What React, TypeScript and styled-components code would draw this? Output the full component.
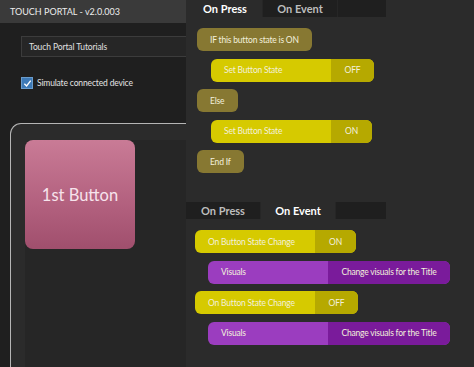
import React from 'react';
import styled, { createGlobalStyle } from 'styled-components';

const GlobalStyle = createGlobalStyle`
  html, body {
    margin: 0;
    padding: 0;
    background: #2b2b2b;
  }
  body {
    font-family: Lato, "Open Sans", sans-serif;
  }
`;

const Screen = styled.div`
  display: flex;
  width: 474px;
  height: 367px;
  overflow: hidden;
`;

/* left: the Touch Portal window */
const AppWindow = styled.div`
  flex: none;
  width: 186px;
  display: flex;
  flex-direction: column;
  background: #1f1f1f;
  overflow: hidden;
`;

const TitleBar = styled.div`
  height: 23px;
  display: flex;
  align-items: center;
  padding-left: 10px;
  background: #3a3a3a;
  color: #ececec;
  font-size: 9px;
`;

const WindowBody = styled.div`
  padding: 13px 0 0 21px;
`;

const Select = styled.div`
  height: 19px;
  display: flex;
  align-items: center;
  padding-left: 7px;
  background: #262626;
  border: 1px solid #3c3c3c;
  border-right: none;
  color: #e0e0e0;
  font-size: 8.5px;
  letter-spacing: -0.1px;
`;

const CheckRow = styled.label`
  display: flex;
  align-items: center;
  gap: 4px;
  margin-top: 20px;
  color: #e4e4e4;
  font-size: 8.5px;
  letter-spacing: -0.15px;
`;

const CheckBox = styled.span`
  width: 12px;
  height: 12px;
  box-sizing: border-box;
  display: flex;
  align-items: center;
  justify-content: center;
  background: #3d79b6;
  border: 1px solid #6a9ccc;
`;

const DevicePanel = styled.div`
  flex: 1;
  display: flex;
  margin: 34px 0 0 10px;
  padding: 16px 0 0 14px;
  background: #2b2b2b;
  border: 1px solid #b5b5b5;
  border-right: none;
  border-bottom: none;
  border-radius: 11px 0 0 0;
`;

const DeviceGrid = styled.div`
  flex: 1;
  background: #262626;
  border-radius: 6px 0 0 0;
`;

const TileButton = styled.div`
  width: 110px;
  height: 109px;
  display: flex;
  align-items: center;
  justify-content: center;
  border-radius: 8px;
  background: linear-gradient(180deg, #c97b96 0%, #b2607e 60%, #a04f6d 100%);
  color: #f7e3ec;
  font-size: 16.5px;
`;

/* right: the action editor */
const ActionPanel = styled.div`
  flex: 1;
  display: flex;
  flex-direction: column;
  background: #2b2b2b;
`;

const Section = styled.div<{ $offset: number; $top: number }>`
  display: flex;
  flex-direction: column;
  margin-top: ${(p) => p.$top}px;
  padding-left: ${(p) => p.$offset}px;
`;

const TabStrip = styled.div<{ $width: number }>`
  display: flex;
  width: ${(p) => p.$width}px;
  height: 17px;
  background: #1f1f1f;
  margin-bottom: 11px;
`;

const Tab = styled.div<{ $active?: boolean }>`
  width: 74px;
  display: flex;
  align-items: center;
  justify-content: center;
  background: ${(p) => (p.$active ? '#2b2b2b' : 'transparent')};
  color: ${(p) => (p.$active ? '#ffffff' : '#bdbdbd')};
  font-size: 11px;
  font-weight: 700;
  border-right: 1px solid #262626;
`;

const Blocks = styled.div`
  display: flex;
  flex-direction: column;
  gap: 7.5px;
`;

const Block = styled.div<{ $indent: number; $width: number; $bg: string }>`
  display: flex;
  height: 23px;
  width: ${(p) => p.$width}px;
  margin-left: ${(p) => p.$indent}px;
  border-radius: 6px;
  overflow: hidden;
  background: ${(p) => p.$bg};
  font-size: 8.5px;
  letter-spacing: -0.2px;
  color: #f3f0dc;
`;

const Part = styled.div<{ $width?: number; $bg?: string; $center?: boolean }>`
  box-sizing: border-box;
  display: flex;
  align-items: center;
  ${(p) => (p.$width ? `width: ${p.$width}px;` : 'flex: 1;')}
  justify-content: ${(p) => (p.$center ? 'center' : 'flex-start')};
  padding-left: ${(p) => (p.$center ? 0 : 13)}px;
  background: ${(p) => p.$bg ?? 'transparent'};
  white-space: nowrap;
`;

const OLIVE = '#877832';
const YELLOW = '#d6ca00';
const YELLOW_DARK = '#b6a900';
const PURPLE = '#9b3dbf';
const PURPLE_DARK = '#7a1b9b';

export default function App() {
  return (
    <>
      <GlobalStyle />
      <Screen>
        <AppWindow>
          <TitleBar>TOUCH PORTAL - v2.0.003</TitleBar>
          <WindowBody>
            <Select>Touch Portal Tutorials</Select>
            <CheckRow>
              <CheckBox>
                <svg width="9" height="9" viewBox="0 0 10 10">
                  <path d="M1.5 5.2 L4 7.8 L8.6 1.8" fill="none" stroke="#fff" strokeWidth="1.5" />
                </svg>
              </CheckBox>
              Simulate connected device
            </CheckRow>
          </WindowBody>
          <DevicePanel>
            <DeviceGrid>
              <TileButton>1st Button</TileButton>
            </DeviceGrid>
          </DevicePanel>
        </AppWindow>

        <ActionPanel>
          {/* on press tab */}
          <Section $offset={2} $top={0}>
            <TabStrip $width={198}>
              <Tab $active>On Press</Tab>
              <Tab>On Event</Tab>
            </TabStrip>
            <Blocks>
              <Block $indent={9} $width={115} $bg={OLIVE}>
                <Part>IF this button state is ON</Part>
              </Block>
              <Block $indent={23} $width={163} $bg={YELLOW}>
                <Part $width={120}>Set Button State</Part>
                <Part $bg={YELLOW_DARK} $center>OFF</Part>
              </Block>
              <Block $indent={9} $width={41} $bg={OLIVE}>
                <Part>Else</Part>
              </Block>
              <Block $indent={23} $width={161} $bg={YELLOW}>
                <Part $width={120}>Set Button State</Part>
                <Part $bg={YELLOW_DARK} $center>ON</Part>
              </Block>
              <Block $indent={9} $width={47} $bg={OLIVE}>
                <Part>End If</Part>
              </Block>
            </Blocks>
          </Section>

          {/* on event tab */}
          <Section $offset={0} $top={29}>
            <TabStrip $width={200}>
              <Tab>On Press</Tab>
              <Tab $active>On Event</Tab>
            </TabStrip>
            <Blocks>
              <Block $indent={9} $width={161} $bg={YELLOW}>
                <Part $width={120}>On Button State Change</Part>
                <Part $bg={YELLOW_DARK} $center>ON</Part>
              </Block>
              <Block $indent={22} $width={242} $bg={PURPLE}>
                <Part $width={120}>Visuals</Part>
                <Part $bg={PURPLE_DARK} $center>Change visuals for the Title</Part>
              </Block>
              <Block $indent={9} $width={163} $bg={YELLOW}>
                <Part $width={120}>On Button State Change</Part>
                <Part $bg={YELLOW_DARK} $center>OFF</Part>
              </Block>
              <Block $indent={22} $width={242} $bg={PURPLE}>
                <Part $width={120}>Visuals</Part>
                <Part $bg={PURPLE_DARK} $center>Change visuals for the Title</Part>
              </Block>
            </Blocks>
          </Section>
        </ActionPanel>
      </Screen>
    </>
  );
}
